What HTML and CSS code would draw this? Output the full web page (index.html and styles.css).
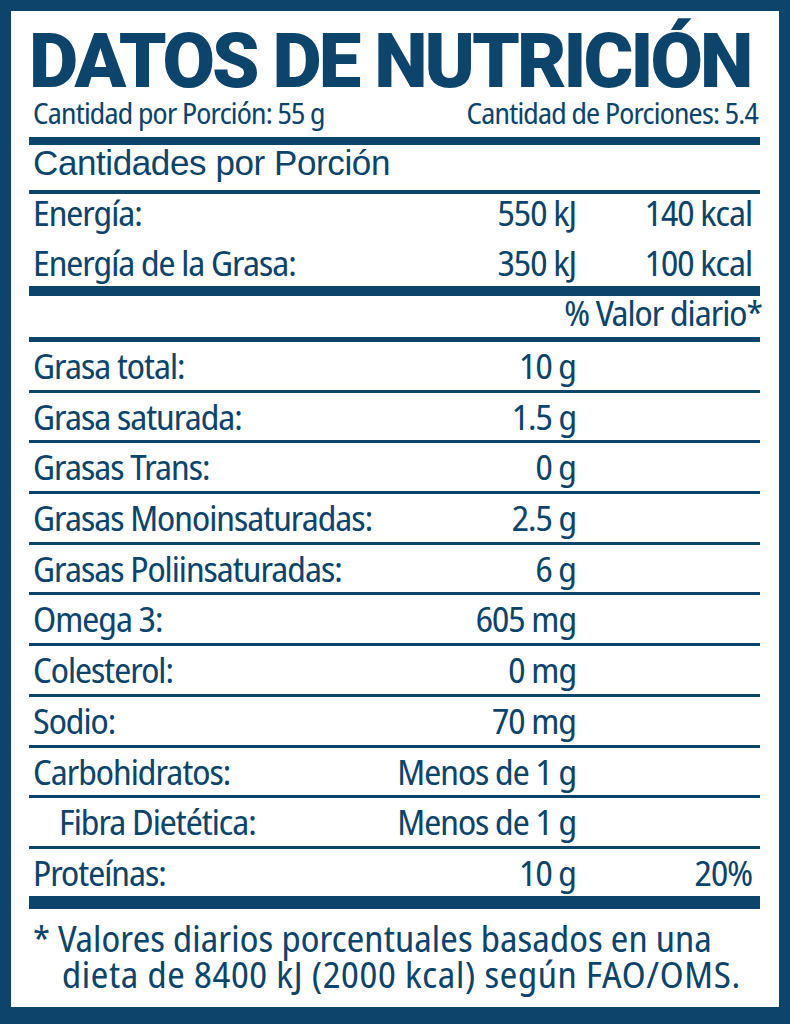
FILE: index.html
```html
<!DOCTYPE html>
<html lang="es">
<head>
<meta charset="utf-8">
<title>Datos de Nutrición</title>
<link rel="stylesheet" href="styles.css">
</head>
<body>
<div class="label">
  <h1 class="title">DATOS DE NUTRICIÓN</h1>
  <div class="serving">
    <span>Cantidad por Porción: 55 g</span>
    <span>Cantidad de Porciones: 5.4</span>
  </div>
  <div class="rule rule-8"></div>
  <div class="section-head">Cantidades por Porción</div>
  <div class="rule rule-4"></div>
  <div class="energy">
    <div class="row energy-row"><span>Energía:</span><span class="val">550 kJ</span><span class="dv">140 kcal</span></div>
    <div class="row energy-row"><span>Energía de la Grasa:</span><span class="val">350 kJ</span><span class="dv">100 kcal</span></div>
  </div>
  <div class="rule rule-10"></div>
  <div class="dv-head">% Valor diario*</div>
  <div class="rule rule-5"></div>
  <div class="nutrients">
    <div class="row item"><span>Grasa total:</span><span class="val">10 g</span><span class="dv"></span></div>
    <div class="row item"><span>Grasa saturada:</span><span class="val">1.5 g</span><span class="dv"></span></div>
    <div class="row item"><span>Grasas Trans:</span><span class="val">0 g</span><span class="dv"></span></div>
    <div class="row item"><span>Grasas Monoinsaturadas:</span><span class="val">2.5 g</span><span class="dv"></span></div>
    <div class="row item"><span>Grasas Poliinsaturadas:</span><span class="val">6 g</span><span class="dv"></span></div>
    <div class="row item"><span>Omega 3:</span><span class="val">605 mg</span><span class="dv"></span></div>
    <div class="row item"><span>Colesterol:</span><span class="val">0 mg</span><span class="dv"></span></div>
    <div class="row item"><span>Sodio:</span><span class="val">70 mg</span><span class="dv"></span></div>
    <div class="row item"><span>Carbohidratos:</span><span class="val">Menos de 1 g</span><span class="dv"></span></div>
    <div class="row item sub"><span>Fibra Dietética:</span><span class="val">Menos de 1 g</span><span class="dv"></span></div>
    <div class="row item last"><span>Proteínas:</span><span class="val">10 g</span><span class="dv">20%</span></div>
  </div>
  <div class="rule rule-13"></div>
  <p class="footnote">
    <span class="fn-line fn-first">* Valores diarios porcentuales basados en una</span>
    <span class="fn-line fn-indent">dieta de 8400 kJ (2000 kcal) según FAO/OMS.</span>
  </p>
</div>
</body>
</html>
```

FILE: styles.css
```css
html, body {
  margin: 0;
  padding: 0;
  background: #ffffff;
}

.label {
  box-sizing: border-box;
  width: 790px;
  height: 1024px;
  border-style: solid;
  border-color: #0c446c;
  border-width: 11px 11px 17px 11px;
  padding: 12px 19px 0 18px;
  color: #0c446c;
  font-family: "Noto Sans Display", "Noto Sans", "Liberation Sans", sans-serif;
  font-stretch: condensed;
  font-size: 35px;
  letter-spacing: -1px;
}

.title {
  margin: 0;
  font-family: Roboto, "Liberation Sans", sans-serif;
  font-stretch: normal;
  font-weight: 900;
  font-size: 76px;
  line-height: 76px;
  height: 76px;
  letter-spacing: -3px;
  white-space: nowrap;
}

.serving {
  display: flex;
  justify-content: space-between;
  height: 38px;
  padding: 0 2px 0 4px;
  font-size: 29px;
  line-height: 28px;
  letter-spacing: -0.8px;
  white-space: nowrap;
}

.rule {
  background: #0c446c;
}
.rule-4 { height: 4px; }
.rule-5 { height: 5px; }
.rule-8 { height: 8px; }
.rule-10 { height: 10px; }
.rule-13 { height: 13px; }

.section-head {
  height: 45px;
  padding-left: 4px;
  font-family: "Liberation Sans", Arial, sans-serif;
  font-stretch: normal;
  font-size: 35px;
  line-height: 35px;
  letter-spacing: -0.4px;
}

.row {
  display: grid;
  grid-template-columns: 1fr auto 176px;
  padding: 0 8px 0 4px;
  white-space: nowrap;
}
.val, .dv {
  text-align: right;
}

.energy {
  display: flex;
  flex-direction: column;
  gap: 8px;
}
.energy-row {
  height: 42px;
  line-height: 38px;
}

.dv-head {
  height: 41px;
  line-height: 34px;
  text-align: right;
  margin-right: -2px;
}

.item {
  height: 47.7px;
  line-height: 48px;
  border-bottom: 3px solid #0c446c;
}
.item.last {
  border-bottom: none;
  height: 47px;
}
.item.sub {
  padding-left: 30px;
}

.footnote {
  margin: 0;
  padding: 12px 0 0 4px;
  font-size: 36px;
  line-height: 36px;
  white-space: nowrap;
}
.fn-line {
  display: block;
}
.fn-first {
  letter-spacing: 0.1px;
}
.fn-indent {
  padding-left: 29px;
  letter-spacing: 0.65px;
}
```
